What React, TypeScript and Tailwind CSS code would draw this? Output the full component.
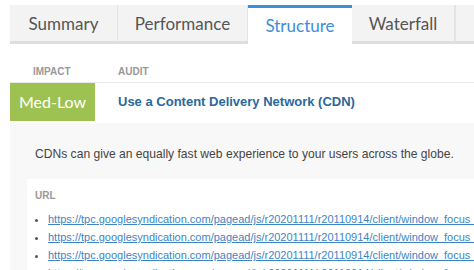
const tabs = [
  { name: "Summary", w: "w-[108px]" },
  { name: "Performance", w: "w-[130px]" },
  { name: "Structure", w: "w-[104px]" },
  { name: "Waterfall", w: "w-[103px]" },
];

const url =
  "https://tpc.googlesyndication.com/pagead/js/r20201111/r20110914/client/window_focus_fy2019.js";

export default function App() {
  return (
    <div className="h-[270px] w-[474px] overflow-hidden bg-white pl-[10px] pt-[5px] font-['Liberation_Sans',sans-serif]">
      <div className="flex h-[39px] border-b-[3px] border-[#dedede] bg-[#f3f3f3] font-['Lato',sans-serif] text-[17px] text-[#555]">
        {tabs.map((t) =>
          t.name === "Structure" ? (
            <div
              key={t.name}
              className={`${t.w} -mb-[3px] flex h-[39px] shrink-0 items-center justify-center border-t-[3px] border-[#3d8ddb] bg-white text-[#3d8ddb]`}
            >
              {t.name}
            </div>
          ) : (
            <div
              key={t.name}
              className={`${t.w} flex shrink-0 items-center justify-center border-r border-[#e4e4e4] pt-[1px]`}
            >
              {t.name}
            </div>
          )
        )}
        <div className="w-[20px] border-l border-[#e4e4e4]" />
      </div>

      <div className="mt-[16px] flex h-[23px] items-center border-b border-[#e8e8e8] text-[10px] font-bold text-[#999]">
        <div className="w-[108px] pl-[23px]">IMPACT</div>
        <div>AUDIT</div>
      </div>

      <div className="flex h-[38px] items-center">
        <div className="flex h-full w-[85px] items-center justify-center bg-[#9dc251] font-['Lato',sans-serif] text-[16px] text-white">
          Med-Low
        </div>
        <div className="pl-[23px] text-[13px] font-bold text-[#2b689c]">
          Use a Content Delivery Network (CDN)
        </div>
      </div>

      <div className="mt-[2px] bg-[#f8f8f8] pl-[17px]">
        <p className="whitespace-nowrap pb-[15px] pl-[8px] pt-[21px] text-[12.1px] leading-[20px] text-[#444]">
          CDNs can give an equally fast web experience to your users across the globe.
        </p>
        <div className="bg-white pl-[8px] pt-[9px]">
          <div className="text-[10px] font-bold text-[#999]">URL</div>
          <ul className="mt-[7px] list-disc pl-[13px] text-[11px] leading-[18px] text-[#555]">
            {[0, 1, 2, 3].map((i) => (
              <li key={i} className="whitespace-nowrap">
                <a className="text-[#3d84c6] underline">{url}</a>
              </li>
            ))}
          </ul>
        </div>
      </div>
    </div>
  );
}
